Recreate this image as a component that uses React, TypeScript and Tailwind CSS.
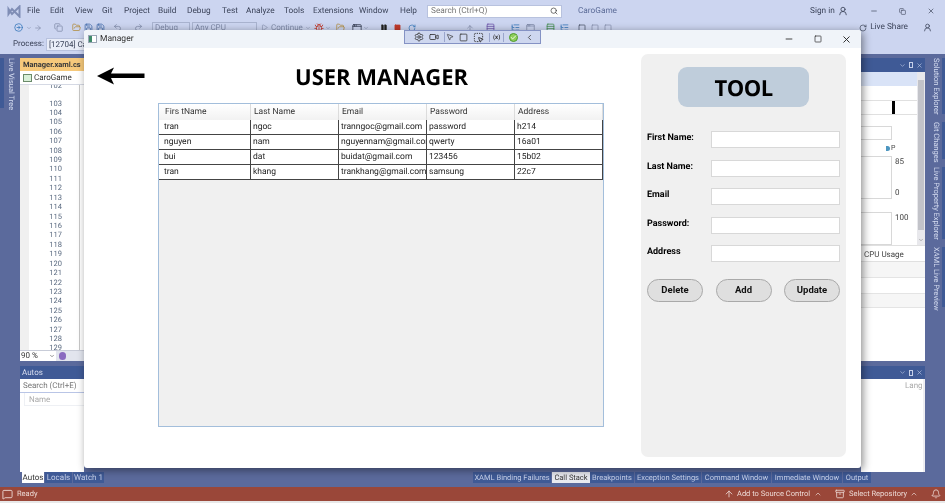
import React from 'react';
import {
  ArrowRight, ArrowUp, Check, ChevronDown, ChevronLeft, ChevronUp, Minus, MousePointer2, Play, Redo2,
  RotateCw, Save, Search, Square, SquareDashedMousePointer, Undo2, X, CircleArrowRight, FolderOpen,
  MessageSquare, Archive, Bell, UserRound, Copy, Settings, Video, Bug, Pause, AppWindow, ListTree, Rows3,
} from 'lucide-react';

const menus = [
  ['File', 'w-[23px]'], ['Edit', 'w-[25px]'], ['View', 'w-[27px]'], ['Git', 'w-[22px]'], ['Project', 'w-[34px]'],
  ['Build', 'w-[29px]'], ['Debug', 'w-[35px]'], ['Test', 'w-[24px]'], ['Analyze', 'w-[38px]'], ['Tools', 'w-[29px]'],
  ['Extensions', 'w-[46px]'], ['Window', 'w-[41px]'], ['Help', 'w-[27px]'],
];
const users = [
  ['tran', 'ngoc', 'tranngoc@gmail.com', 'password', 'h214'],
  ['nguyen', 'nam', 'nguyennam@gmail.com', 'qwerty', '16a01'],
  ['bui', 'dat', 'buidat@gmail.com', '123456', '15b02'],
  ['tran', 'khang', 'trankhang@gmail.com', 'samsung', '22c7'],
];
const headers = ['Firs tName', 'Last Name', 'Email', 'Password', 'Address'];
const fields = ['First Name:', 'Last Name:', 'Email', 'Password:', 'Address'];
const lineNumbers = Array.from({ length: 27 }, (_, i) => 103 + i);
const bottomTabs = [
  ['XAML Binding Failures', 'w-[79px]'], ['Call Stack', 'w-[38px]'], ['Breakpoints', 'w-[45px]'], ['Exception Settings', 'w-[67px]'],
  ['Command Window', 'w-[70px]'], ['Immediate Window', 'w-[71px]'], ['Output', 'w-[29px]'],
];
const rightRail = [
  ['Solution Explorer', 'h-[56px]'], ['Git Changes', 'h-[37px]'], ['Live Property Explorer', 'h-[72px]'], ['XAML Live Preview', 'h-[60px]'],
];

function BackArrow() {
  return (
    <svg width="48" height="18" viewBox="0 0 48 18">
      <path d="M0 9 L17 0.5 L14 6.5 H47.5 V11 H14 L17 17.5 Z" fill="#000" />
    </svg>
  );
}

function VsLogo() {
  return (
    <svg width="14" height="13" viewBox="0 0 14 13" fill="none" stroke="#7f8db5" strokeWidth="2">
      <path d="M1.5 4 L5 9 L12.5 1.5 V11.5 L5 4 L1.5 9 Z" />
    </svg>
  );
}

function DebugToolbar() {
  return (
    <div className="absolute left-[404px] top-[30px] h-[14px] w-[137px] flex items-center gap-[5px] pl-[9px] bg-[#ced7ef] border border-[#8492c4] text-[#333]">
      <Settings size={10} />
      <Video size={10} />
      <MousePointer2 size={10} className="border-l border-[#9aa6cc] pl-[1px]" />
      <Square size={9} />
      <SquareDashedMousePointer size={11} />
      <span className="text-[6px] font-bold px-[3px] border-x border-[#9aa6cc]">(x)</span>
      <span className="flex items-center justify-center w-[9px] h-[9px] rounded-full bg-[#8fce5a] border border-[#4d9a2c] text-white">
        <Check size={7} strokeWidth={3} />
      </span>
      <ChevronLeft size={9} className="ml-[2px]" />
    </div>
  );
}

function ManagerWindow() {
  return (
    <div className="absolute left-[84px] top-[30px] w-[777px] h-[438px] flex flex-col bg-white rounded-[3px] shadow-[2px_2px_8px_rgba(0,0,0,0.45)] overflow-hidden">
      <div className="h-[18px] shrink-0 flex items-center bg-[#f0f4f9] pl-[4px]">
        <span className="w-[9px] h-[8px] border border-[#9aa5b5] bg-white flex">
          <span className="w-[3px] bg-[#3f8a6a]" />
        </span>
        <span className="ml-[3px] text-[8.5px] text-[#333]">Manager</span>
        <Minus size={10} className="ml-auto text-[#222]" />
        <Square size={8} className="ml-[20px] text-[#222]" />
        <X size={11} className="ml-[19px] mr-[9px] text-[#222]" />
      </div>
      <div className="flex-1 flex min-h-0 pr-[15px]">
        <div className="w-[557px] shrink-0 flex flex-col pl-[13px]">
          <div className="h-[55px] shrink-0 flex items-center">
            <BackArrow />
            <h1 className="ml-[150px] mt-[3px] text-[22px] leading-none font-bold text-black whitespace-nowrap" style={{ fontFamily: '"Open Sans", sans-serif' }}>USER MANAGER</h1>
          </div>
          <div className="ml-[61px] w-[446px] h-[324px] bg-[#f0f0f0] border border-[#a3bedb]">
            <div className="grid grid-cols-[92px_88px_88px_88px_88px] h-[16px] bg-gradient-to-b from-white to-[#f2f2f2]">
              {headers.map((h, j) => (
                <div key={h} className={`${j === 0 ? 'pl-[6px]' : 'pl-[3px]'} text-[8.5px] leading-[17px] text-[#333] border-r border-[#dcdcdc]`}>{h}</div>
              ))}
            </div>
            {users.map((row, i) => (
              <div key={i} className="grid grid-cols-[92px_88px_88px_88px_88px] h-[15px] bg-white border-b-[1.5px] border-[#444]">
                {row.map((cell, j) => (
                  <div key={j} className={`${j === 0 ? 'pl-[5px]' : 'pl-[2px]'} pr-[1px] text-[8.5px] leading-[15px] text-[#222] border-r-[1.5px] border-[#444] overflow-hidden whitespace-nowrap`}>{cell}</div>
                ))}
              </div>
            ))}
          </div>
        </div>
        <div className="flex-1 mb-[11px] mt-[6px] bg-[#f0f0f0] rounded-[7px] flex flex-col px-[6px]">
          <div className="mx-[31px] mt-[13px] h-[40px] pt-[2px] bg-[#bfcddb] rounded-[9px] flex items-center justify-center text-[22px] font-bold text-black tracking-[-0.5px]" style={{ fontFamily: '"Open Sans", sans-serif' }}>TOOL</div>
          <div className="mt-[24px] flex flex-col gap-[11.5px]">
            {fields.map(f => (
              <div key={f} className="h-[17px] flex items-center">
                <span className="w-[64px] -mt-[1px] text-[9px] font-bold text-black">{f}</span>
                <input className="w-[129px] h-[17px] bg-white border border-[#d8d8d8] outline-none" />
              </div>
            ))}
          </div>
          <div className="mt-[17px] flex justify-between w-[193px]">
            {['Delete', 'Add', 'Update'].map(b => (
              <button key={b} className="w-[56px] h-[23px] rounded-[12px] bg-[#dfdfdf] border border-[#a9a9a9] text-[9.5px] font-bold text-[#111]">{b}</button>
            ))}
          </div>
        </div>
      </div>
    </div>
  );
}

function EditorColumn() {
  return (
    <div className="w-[64px] shrink-0 flex flex-col">
      <div className="h-[13px] shrink-0 bg-[#f6c97b] pl-[3px] text-[7.5px] leading-[13px] font-bold text-[#3a3a3a] whitespace-nowrap overflow-hidden">Manager.xaml.cs</div>
      <div className="h-[14px] shrink-0 bg-white flex items-center pl-[3px] border-b border-[#d5d9e4]">
        <span className="w-[9px] h-[8px] bg-[#d8efd8] border border-[#6a8a6a]" />
        <span className="ml-[2px] text-[8px] text-[#333]">CaroGame</span>
      </div>
      <div className="flex-1 min-h-0 bg-white flex overflow-hidden">
        <div className="w-[9px] bg-[#f0f0f0]" />
        <div className="w-[33px] flex flex-col items-end -mt-[4px] text-[7.5px] leading-[9.42px] text-[#5a6a80]">
          <span className="h-[17.5px] shrink-0">102</span>
          {lineNumbers.map(n => <span key={n} className="shrink-0">{n}</span>)}
        </div>
        <div className="w-[1px] ml-[17px] bg-[#c8c8c8]" />
      </div>
      <div className="h-[11px] shrink-0 flex bg-[#e2e5ee] border-t border-[#c8ccd8]">
        <span className="w-[36px] bg-white text-[8px] leading-[10px] text-[#333] pl-[1px] flex items-center justify-between pr-[1px]">
          90 %<ChevronDown size={6} />
        </span>
        <span className="ml-[3px] w-[7px] h-[8px] mt-[1px] rounded-full bg-[#8a6ac0]" />
      </div>
      <div className="h-[5px] shrink-0" />
      <div className="h-[13px] shrink-0 bg-[#3f5a96] pl-[2px] text-[8px] leading-[13px] text-[#d8def0]">Autos</div>
      <div className="h-[14px] shrink-0 bg-white border-b border-[#b9c5e6] pl-[3px] text-[8px] leading-[13px] text-[#777]">Search (Ctrl+E)</div>
      <div className="h-[79px] shrink-0 bg-white">
        <div className="h-[13px] ml-[4px] pl-[4px] text-[8px] leading-[13px] text-[#aaa] border-b border-[#eef0f4] border-l">Name</div>
      </div>
    </div>
  );
}

function RightColumn() {
  return (
    <div className="w-[64px] ml-auto shrink-0 flex flex-col">
      <div className="h-[14px] shrink-0 bg-[#3f5a96] flex items-center justify-end gap-[3px] pr-[2px] text-[#c5cfe8]">
        <ChevronDown size={7} /><span className="w-[4px] h-[6px] border border-[#c5cfe8]" /><X size={7} />
      </div>
      <div className="flex h-[173px] shrink-0 bg-white">
        <div className="w-[56px] flex flex-col">
          <div className="h-[14px] bg-[#d9e3f7]" />
          <div className="mt-[14px] h-[16px] border-y border-[#e0e0e0] flex">
            <span className="ml-[31px] w-[3px] bg-black" />
          </div>
          <div className="mt-[11px] h-[14px] w-[31px] border border-l-0 border-[#d8d8d8]" />
          <div className="mt-[1px] h-[14px] text-[7px] leading-[14px] text-[#444] pl-[25px] flex items-center">
            <span className="w-[4px] h-[5px] bg-[#4d96c0] rounded-r-full mr-[1px]" />P
          </div>
          <div className="mt-[1px] flex gap-[3px]">
            <div className="h-[43px] w-[31px] border border-l-0 border-[#d8d8d8]" />
            <div className="h-[43px] flex flex-col justify-between text-[8px] text-[#444]"><span>85</span><span>0</span></div>
          </div>
          <div className="mt-[13px] flex gap-[3px]">
            <div className="h-[33px] w-[31px] border border-l-0 border-[#d8d8d8]" />
            <span className="text-[8px] text-[#444]">100</span>
          </div>
        </div>
        <div className="w-[8px] bg-[#e8e8ec] flex flex-col items-center justify-between py-[2px] text-[#777]">
          <div className="w-[6px] h-[150px] mt-[6px] bg-[#c2c3c9]" />
          <ChevronDown size={6} />
        </div>
      </div>
      <div className="flex-1 min-h-0 bg-white">
        <div className="h-[17px] pl-[3px] text-[8px] leading-[17px] text-[#444] border-y border-[#e0e0e0]">CPU Usage</div>
        <div className="h-[16px] bg-[#f6f6f6] border-b border-[#e4e4e4]" />
        <div className="h-[16px] border-b border-[#e4e4e4]" />
        <div className="h-[14px] bg-[#f6f6f6] border-b border-[#e4e4e4]" />
      </div>
      <div className="h-[5px] shrink-0" />
      <div className="h-[13px] shrink-0 bg-[#3f5a96] flex items-center justify-end gap-[3px] pr-[2px] text-[#c5cfe8]">
        <ChevronDown size={7} /><span className="w-[4px] h-[6px] border border-[#c5cfe8]" /><X size={7} />
      </div>
      <div className="h-[93px] shrink-0 bg-white flex justify-between">
        <span className="ml-[44px] mt-[1px] text-[8px] text-[#aaa]">Lang</span>
        <div className="w-[8px] bg-[#eeeef2]" />
      </div>
    </div>
  );
}

export default function App() {
  return (
    <div className="relative w-[945px] h-[503px] overflow-hidden flex flex-col bg-[#ccd5f0] blur-[0.35px] [text-rendering:geometricPrecision]" style={{ fontFamily: 'Roboto, "Noto Sans", sans-serif' }}>
      <div className="h-[21px] pt-[1px] shrink-0 flex items-center text-[8.25px] text-[#3a4258] whitespace-nowrap">
        <span className="ml-[7px] mr-[6px] flex"><VsLogo /></span>
        {menus.map(([m, w]) => <span key={m} className={w}>{m}</span>)}
        <div className="w-[135px] h-[13px] bg-white border border-[#b8c2de] flex items-center px-[3px] text-[#777]">
          Search (Ctrl+Q)<Search size={8} className="ml-auto text-[#333]" />
        </div>
        <span className="ml-[16px] w-[35px] text-[#5a6a96]">CaroGame</span>
        <span className="ml-[197px] w-[23px]">Sign in</span>
        <UserRound size={10} className="ml-[5px]" />
        <Minus size={8} className="ml-[22px]" />
        <Copy size={7} className="ml-[21px]" />
        <X size={8} className="ml-[21px]" />
      </div>
      <div className="h-[13px] shrink-0 flex items-center text-[#7f8aa8] text-[8px] pl-[14px] whitespace-nowrap">
        <CircleArrowRight size={9} className="text-[#2d72b8]" />
        <ChevronDown size={6} className="ml-[3px]" />
        <ArrowRight size={8} className="ml-[2px]" />
        <Copy size={9} className="ml-[12px]" />
        <FolderOpen size={9} className="ml-[9px] text-[#b08a3a]" />
        <Save size={9} className="ml-[3px] text-[#3a66a8]" />
        <Save size={9} className="ml-[3px] text-[#3a66a8]" />
        <Undo2 size={9} className="ml-[8px]" />
        <Redo2 size={9} className="ml-[12px]" />
        <span className="ml-[9px] w-[38px] h-[11px] border border-[#a9b3cf] text-[8px] leading-[9px] pl-[2px]">Debug</span>
        <span className="ml-[2px] w-[65px] h-[11px] border border-[#a9b3cf] text-[8px] leading-[9px] pl-[2px]">Any CPU</span>
        <Play size={7} className="ml-[4px]" />
        <span className="ml-[3px] text-[8px] w-[32px]">Continue</span>
        <ChevronDown size={6} className="ml-[2px]" />
        <Bug size={10} className="ml-[3px] text-[#c0392b]" />
        <ChevronDown size={6} className="ml-[1px]" />
        <FolderOpen size={9} className="ml-[5px] text-[#b08a3a]" />
        <AppWindow size={10} className="ml-[7px] text-[#3a4258]" />
        <ChevronDown size={6} className="ml-[1px]" />
        <Pause size={8} className="ml-[11px] text-[#222]" fill="#222" />
        <Square size={7} className="ml-[6px] text-[#c0392b]" fill="#c0392b" />
        <RotateCw size={8} className="ml-[7px] text-[#2d72b8]" />
        <ArrowUp size={8} className="ml-[50px]" />
        <Rows3 size={9} className="ml-[12px] text-[#6a4fa8]" />
        <ListTree size={9} className="ml-[16px] text-[#2d72b8]" />
        <AppWindow size={9} className="ml-[6px]" />
        <Rows3 size={9} className="ml-[11px] text-[#3d8a4a]" />
        <ListTree size={9} className="ml-[5px] text-[#2d72b8]" />
        <Square size={8} className="ml-[9px] text-[#3a4258]" />
        <Square size={8} className="ml-[5px]" />
        <Square size={8} className="ml-[5px]" />
        <RotateCw size={8} className="ml-auto text-[#3a4258]" />
        <span className="ml-[3px] mr-[15px] text-[8.25px] text-[#3a4258]">Live Share</span>
        <UserRound size={9} className="mr-[13px] text-[#3a4258]" />
      </div>
      <div className="h-[20px] shrink-0 flex items-center pl-[13px] text-[8px] text-[#3a4258]">
        Process:
        <span className="ml-[2px] w-[50px] h-[13px] bg-[#e9edf8] border border-[#b8c2de] pl-[2px] leading-[11px] whitespace-nowrap overflow-hidden">[12704] CaroGame</span>
      </div>
      <div className="flex-1 min-h-0 flex bg-[#5b6a9c]">
        <div className="w-[20px] shrink-0 pt-[4px] flex">
          <span className="w-[4px] h-[50px] bg-[#3f5a96]" />
          <span className="ml-[2px] h-[50px] text-[7.5px] leading-[10px] text-[#d7def2] [writing-mode:vertical-rl] whitespace-nowrap">Live Visual Tree</span>
        </div>
        <div className="flex-1 min-w-0 flex flex-col pt-[4px]">
          <div className="flex-1 min-h-0 flex">
            <EditorColumn />
            <RightColumn />
          </div>
          <div className="h-[15px] shrink-0 flex items-start">
            <div className="ml-[2px] flex text-[8px] leading-[11px] text-[#c5cfe8]">
              <span className="w-[22px] h-[11px] bg-white text-[#333] text-center">Autos</span>
              <span className="ml-[1px] w-[27px] h-[11px] bg-[#3f5a96] text-center">Locals</span>
              <span className="ml-[1px] w-[31px] h-[11px] bg-[#3f5a96] text-center">Watch 1</span>
            </div>
            <div className="ml-[369px] flex text-[7.5px] leading-[11px] text-[#c5cfe8] whitespace-nowrap">
              {bottomTabs.map(([t, w]) => (
                <span key={t} className={t === 'Call Stack' ? `${w} h-[11px] text-center bg-[#e8eaf0] text-[#333]` : `${w} h-[11px] text-center bg-[#3f5a96] border-r border-[#5b6a9c]`}>{t}</span>
              ))}
            </div>
          </div>
        </div>
        <div className="w-[20px] shrink-0 pt-[4px] flex flex-col gap-[8px]">
          {rightRail.map(([t, h]) => (
            <div key={t} className={`${h} flex`}>
              <span className="ml-[5px] w-[12px] text-[7.5px] leading-[12px] text-[#d7def2] [writing-mode:vertical-rl] whitespace-nowrap">{t}</span>
              <span className="ml-auto w-[4px] bg-[#3f5a96]" />
            </div>
          ))}
        </div>
      </div>
      <div className="h-[14px] shrink-0 flex items-center bg-[#9a4739] text-[7.5px] text-[#ecd9d4] whitespace-nowrap">
        <MessageSquare size={11} className="ml-[2px]" />
        <span className="ml-[4px] w-[21px]">Ready</span>
        <ArrowUp size={10} className="ml-[686px]" />
        <span className="ml-[3px] w-[74px]">Add to Source Control</span>
        <ChevronUp size={8} className="ml-[3px]" />
        <Archive size={10} className="ml-[13px]" />
        <span className="ml-[4px] w-[58px]">Select Repository</span>
        <ChevronUp size={8} className="ml-[3px]" />
        <Bell size={10} className="ml-[13px]" />
      </div>
      <div className="h-[2px] shrink-0 bg-[#e8e8e8]" />
      <ManagerWindow />
      <DebugToolbar />
    </div>
  );
}
